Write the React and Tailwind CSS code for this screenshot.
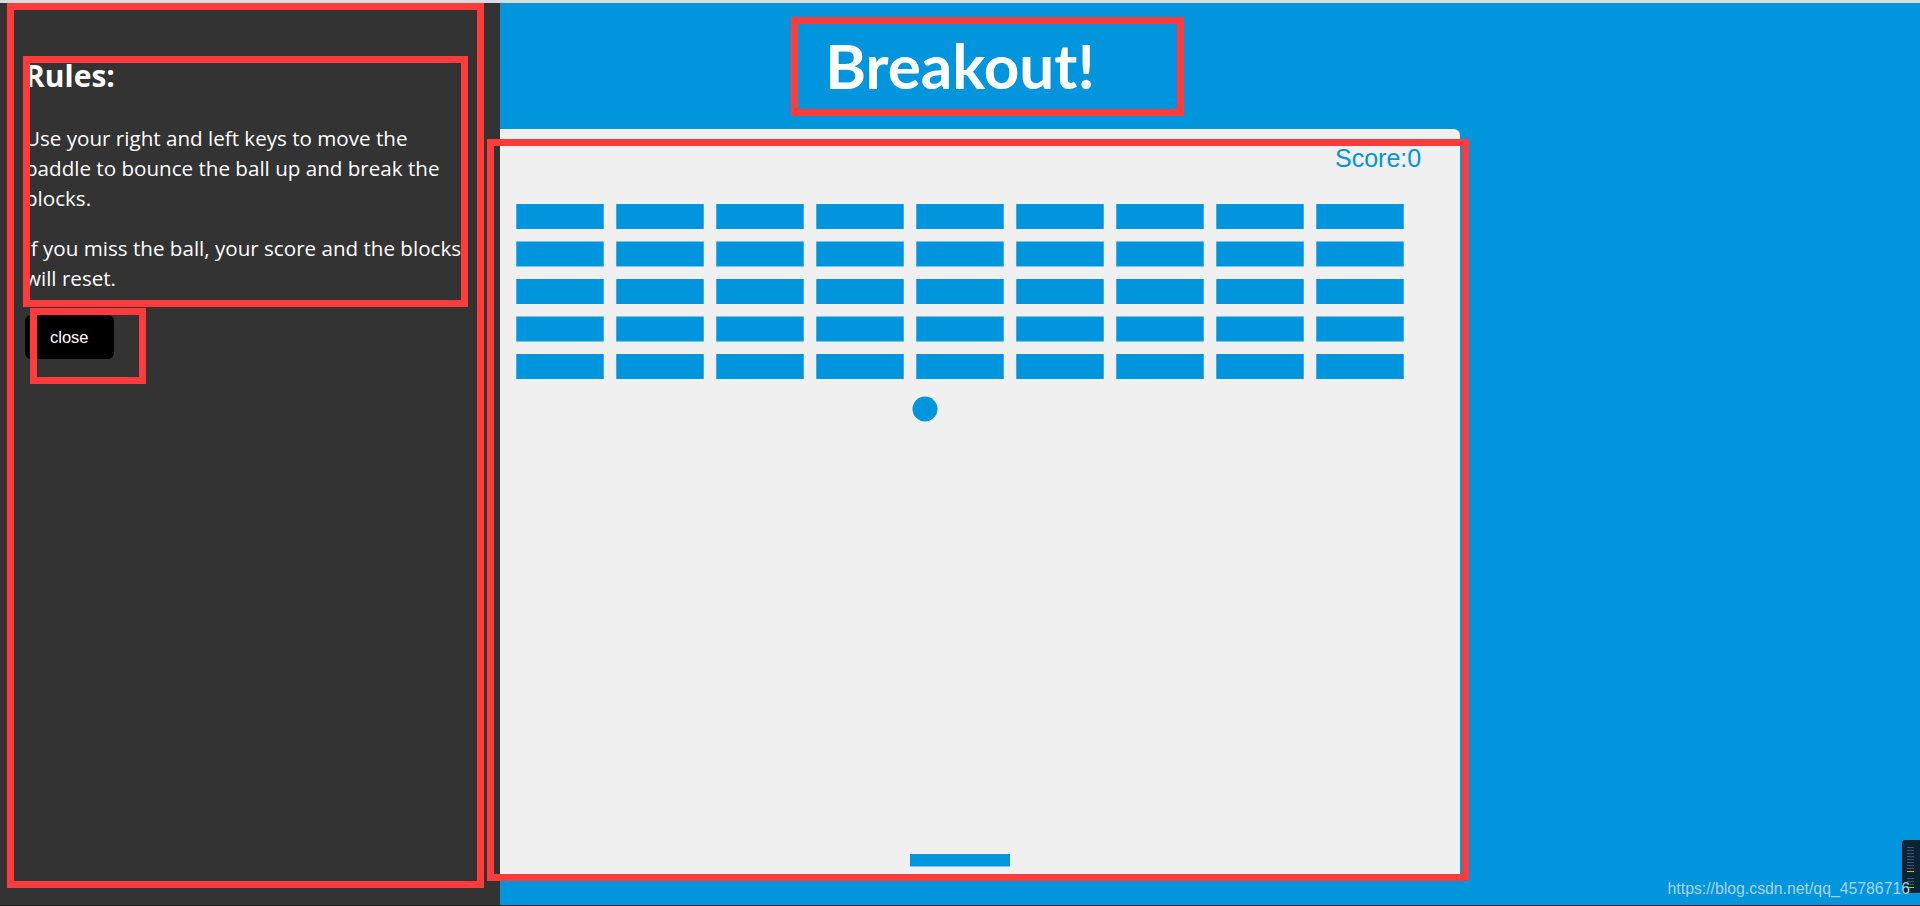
import React from "react";

const BLUE = "#0095dd";

const bricks = [];
for (let i = 0; i < 9; i++) {
  for (let j = 0; j < 5; j++) {
    bricks.push({ x: i * 80 + 45, y: j * 30 + 60 });
  }
}

// game board drawn like the original canvas (800x600 scaled to 1000x750)
const Board = () => (
  <div className="mt-[33px] h-[750px] w-[1000px] shrink-0 overflow-hidden rounded-[6px] bg-[#f0f0f0]">
    <svg width="1000" height="750" viewBox="0 0 800 600">
      <text
        x="700"
        y="30"
        fill={BLUE}
        fontSize="20"
        fontFamily="'Liberation Sans', Arial, sans-serif"
      >
        Score:0
      </text>
      {bricks.map((b, idx) => (
        <rect key={idx} x={b.x} y={b.y} width="70" height="20" fill={BLUE} />
      ))}
      <circle cx="372" cy="224" r="10" fill={BLUE} />
      <rect x="360" y="580" width="80" height="10" fill={BLUE} />
    </svg>
  </div>
);

const Rules = () => (
  <aside className="absolute left-0 top-0 bottom-0 w-[500px] bg-[#333333] p-[25px] text-white font-['Open_Sans','Noto_Sans',sans-serif]">
    <h2 className="mt-[25px] mb-[25px] text-[30px] font-bold leading-[45px]">Rules:</h2>
    <p className="mb-[20px] whitespace-nowrap text-[20.6px] leading-[30px]">
      Use your right and left keys to move the
      <br />
      paddle to bounce the ball up and break the
      <br />
      blocks.
    </p>
    <p className="mb-[20px] whitespace-nowrap text-[20.6px] leading-[30px]">
      If you miss the ball, your score and the blocks
      <br />
      will reset.
    </p>
    <button className="mt-[2px] rounded-[6px] bg-black px-[25px] py-[12.5px] text-[16.5px] leading-[19px] text-white font-['Liberation_Sans',Arial,sans-serif]">
      close
    </button>
  </aside>
);

// red marker boxes drawn over the screenshot
const Marker = ({ className }) => (
  <div className={"pointer-events-none absolute border-[7px] border-[#ff3b3b] " + className} />
);

const App = () => {
  return (
    <div className="relative flex h-[906px] w-[1920px] flex-col overflow-hidden">
      <div className="h-[3px] bg-[#d9dcdf]" />

      <main className="relative flex flex-1 flex-col items-center bg-[#0095dd]">
        <h1 className="mt-[31px] text-[62px] font-bold leading-[62px] text-white font-['Lato','Noto_Sans',sans-serif]">
          Breakout!
        </h1>

        <Board />

        <Rules />

        <div className="absolute right-0 top-[837px] flex h-[53px] w-[18px] flex-col gap-[2px] rounded-l-[3px] bg-[#0c2334] pl-[5px] pt-[7px]">
          {[0, 1, 2, 3, 4, 5, 6, 7].map((n) => (
            <div key={n} className="h-[1px] w-[7px] bg-[#3d5566]" />
          ))}
          <div className="h-[1px] w-[7px] bg-[#f0a030]" />
          <div className="mt-[4px] h-[1px] w-[7px] bg-[#3d5566]" />
          <div className="h-[1px] w-[7px] bg-[#3d5566]" />
          <div className="h-[1px] w-[7px] bg-[#3d5566]" />
          <div className="h-[1px] w-[7px] bg-[#8fe030]" />
        </div>

        <span className="absolute right-[10px] top-[877px] text-[15.8px] leading-[18px] text-[#a9d3ec] font-['Liberation_Sans',Arial,sans-serif]">
          https://blog.csdn.net/qq_45786716
        </span>
      </main>

      <div className="h-[1px] bg-[#1e1e1e]" />

      <Marker className="left-[7px] top-[3px] h-[885px] w-[477px]" />
      <Marker className="left-[23px] top-[56px] h-[251px] w-[445px]" />
      <Marker className="left-[30px] top-[308px] h-[76px] w-[116px]" />
      <Marker className="left-[791px] top-[17px] h-[99px] w-[393px]" />
      <Marker className="left-[487px] top-[139px] h-[742px] w-[982px]" />
    </div>
  );
};

export default App;
